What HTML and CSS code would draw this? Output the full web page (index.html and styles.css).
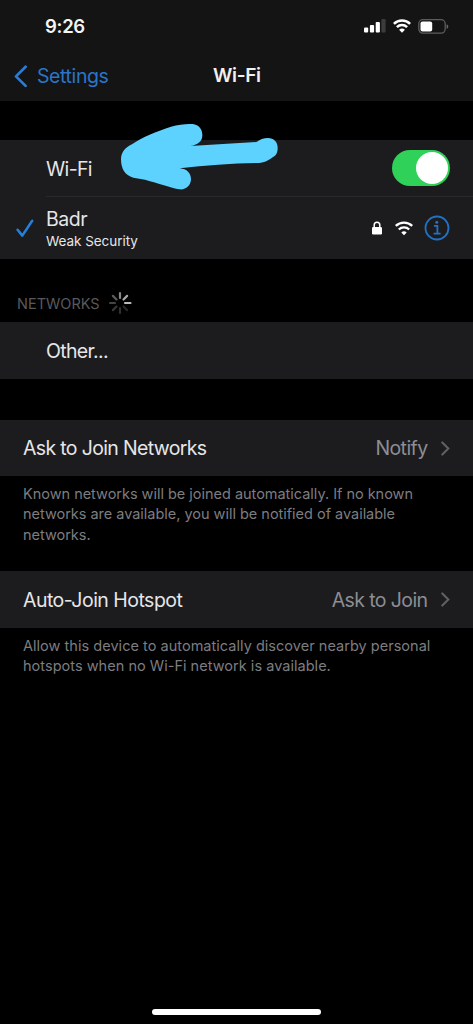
FILE: index.html
```html
<!DOCTYPE html>
<html lang="en">
<head>
<meta charset="utf-8">
<title>Wi-Fi</title>
<link rel="stylesheet" href="styles.css">
</head>
<body>
<div class="screen">
  <header class="header">
    <div class="status">
      <span class="time">9:26</span>
      <div class="status-icons">
        <svg width="22" height="14" viewBox="0 0 22 14"><g fill="#fff"><rect x="0" y="8.5" width="4.2" height="5" rx="1"/><rect x="5.9" y="6" width="4.2" height="7.5" rx="1"/><rect x="11.7" y="3" width="4.2" height="10.5" rx="1"/></g><rect x="17.4" y="0" width="4.2" height="13.5" rx="1" fill="#3c3c3e"/></svg>
        <svg class="status-wifi" width="18" height="14" viewBox="0 0 18 14"><g fill="none" stroke="#fff" stroke-width="2.5"><path d="M.9 4.9a11.6 11.6 0 0 1 16.2 0"/><path d="M3.9 8.2a7.3 7.3 0 0 1 10.2 0"/></g><path d="M9 13.7 6.1 10.8a4.2 4.2 0 0 1 5.8 0z" fill="#fff"/></svg>
        <svg class="battery" width="31" height="15" viewBox="0 0 31 15"><rect x=".8" y=".7" width="26.4" height="13.4" rx="4" fill="none" stroke="#5c5c5e" stroke-width="1.3"/><rect x="2.5" y="2.4" width="11.7" height="10" rx="2" fill="#fff"/><path d="M28.6 5.2c2.2.9 2.2 3.7 0 4.6z" fill="#6a6a6c"/></svg>
      </div>
    </div>
    <nav class="nav">
      <a class="back"><svg width="14" height="23" viewBox="0 0 14 23"><path d="M11.6 1.8 2 11.4l9.6 9.5" fill="none" stroke="#2b7cd6" stroke-width="2.7" stroke-linecap="round" stroke-linejoin="round"/></svg><span class="back-label">Settings</span></a>
      <h1 class="title">Wi-Fi</h1>
    </nav>
  </header>

  <section class="card wifi-card">
    <div class="row wifi-row">
      <span class="label wifi-label">Wi-Fi</span>
      <span class="toggle"><span class="knob"></span></span>
    </div>
    <div class="row network-row">
      <svg class="check" width="18" height="19" viewBox="0 0 18 19"><path d="M1.6 10.8 6.3 16.6 16.2 1.7" fill="none" stroke="#2380dc" stroke-width="2.5" stroke-linecap="round" stroke-linejoin="round"/></svg>
      <div class="network">
        <span class="label">Badr</span>
        <span class="security">Weak Security</span>
      </div>
      <svg class="lock" width="10" height="14" viewBox="0 0 10 14"><rect x="0" y="6" width="10" height="7.5" rx="1.2" fill="#fff"/><path d="M2.2 6.5V4a2.8 2.8 0 0 1 5.6 0v2.5" fill="none" stroke="#fff" stroke-width="1.5"/></svg>
      <svg class="row-wifi" width="18" height="15" viewBox="0 0 18 15"><g fill="none" stroke="#fff" stroke-width="2.3"><path d="M.8 4.9a11.7 11.7 0 0 1 16.4 0"/><path d="M3.8 8.5a7.4 7.4 0 0 1 10.4 0"/></g><path d="M9 14.3 6.3 11.5a3.9 3.9 0 0 1 5.4 0z" fill="#fff"/></svg>
      <svg class="info" width="26" height="26" viewBox="0 0 26 26"><g fill="none" stroke="#2272c4" stroke-width="1.8"><circle cx="13" cy="13" r="11.5"/><path d="M10 10.8h3.4v7.7M9.6 18.6h7"/></g><circle cx="12.8" cy="7.2" r="1.5" fill="#2272c4"/></svg>
    </div>
    <svg class="arrow" width="180" height="80" viewBox="0 0 540 240"><path d="M33 132C34 112 45 98 66 88 92 68 142 48 183 35 206 28 229 26 248 27 268 29 278 45 277 62 276 78 266 88 241 93L439 81C449 74 461 69 474 69 491 69 503 81 503 98 503 113 499 121 486 128 471 138 460 144 439 144 364 145 287 151 209 160 231 162 243 174 243 193 242 213 227 225 209 223 181 218 146 205 105 194L70 188C44 180 33 161 33 132Z" fill="#5dd2ff"/></svg>
  </section>

  <div class="networks-heading">
    <span class="networks-text">NETWORKS</span>
    <svg width="24" height="24" viewBox="-12 -12 24 24"><g stroke-width="2.2" stroke-linecap="round"><path d="M0-5v-5" stroke="#858585"/><path d="m3.5-3.5 3.6-3.6" stroke="#a6a6a6"/><path d="M5 0h5.5" stroke="#bcbcbc"/><path d="m3.5 3.5 3.6 3.6" stroke="#272727"/><path d="M0 5v5" stroke="#303030"/><path d="m-3.5 3.5-3.6 3.6" stroke="#363636"/><path d="M-5 0h-5" stroke="#444"/><path d="m-3.5-3.5-3.6-3.6" stroke="#5b5b5b"/></g></svg>
  </div>
  <section class="card row other-row"><span class="label">Other...</span></section>

  <section class="card row ask-row">
    <span class="label">Ask to Join Networks</span>
    <span class="value">Notify</span>
    <svg class="chevron" width="9" height="15" viewBox="0 0 9 15"><path d="m1.3 1.4 6 6.1-6 6.1" fill="none" stroke="#606064" stroke-width="2.1" stroke-linecap="round"/></svg>
  </section>
  <p class="note note-ask">Known networks will be joined automatically. If no known<br>networks are available, you will be notified of available<br>networks.</p>

  <section class="card row auto-row">
    <span class="label auto">Auto-Join Hotspot</span>
    <span class="value">Ask to Join</span>
    <svg class="chevron" width="9" height="15" viewBox="0 0 9 15"><path d="m1.3 1.4 6 6.1-6 6.1" fill="none" stroke="#606064" stroke-width="2.1" stroke-linecap="round"/></svg>
  </section>
  <p class="note note-auto">Allow this device to automatically discover nearby personal<br>hotspots when no Wi-Fi network is available.</p>

  <div class="home-bar"></div>
</div>
</body>
</html>
```
FILE: styles.css
```css
* { box-sizing: border-box; }
body { margin: 0; background: #000; }
.screen {
  width: 473px;
  height: 1024px;
  display: flex;
  flex-direction: column;
  background: #000;
  font-family: Inter, "Liberation Sans", sans-serif;
  color: #e6e6e8;
  white-space: nowrap;
  overflow: hidden;
}
.header { height: 101px; background: #141414; flex: none; }
.status { height: 52px; padding: 0 24px 0 45px; display: flex; align-items: center; justify-content: space-between; }
.time { font-size: 18.5px; font-weight: 600; line-height: 24px; letter-spacing: -.3px; color: #f4f4f4; }
.status-icons { display: flex; align-items: center; }
.status-wifi { margin-left: 7px; }
.battery { margin-left: 7px; }
.nav { height: 48px; padding-left: 14px; display: grid; grid-template-columns: 199px 1fr; align-items: center; }
.back { display: flex; align-items: center; gap: 9px; }
.back-label { font-size: 19.5px; line-height: 24px; letter-spacing: -.4px; color: #2b74c8; }
.title { margin: 0; font-size: 19px; line-height: 24px; letter-spacing: -.35px; font-weight: 600; color: #f0f0f0; }

.card { background: #1c1c1f; flex: none; }
.row { display: flex; align-items: center; }
.label { font-size: 19.5px; line-height: 24px; letter-spacing: -.65px; }
.wifi-card { margin-top: 39px; height: 119px; position: relative; }
.wifi-row { height: 57px; margin-left: 46px; padding-right: 23px; justify-content: space-between; border-bottom: 1px solid #29292c; }
.wifi-label { padding-top: 2px; }
.toggle { width: 58px; height: 36px; border-radius: 18px; padding: 2px; background: #30d158; display: flex; justify-content: flex-end; }
.knob { width: 32px; height: 32px; border-radius: 50%; background: #fff; }
.network-row { height: 62px; padding-left: 16px; padding-right: 23px; }
.network { display: flex; flex-direction: column; margin-left: 12px; padding-top: 2px; flex: 1; align-items: flex-start; }
.network .label { letter-spacing: -.5px; }
.security { font-size: 13.5px; line-height: 20px; letter-spacing: -.05px; }
.row-wifi { margin-left: 13px; }
.info { margin-left: 11px; }
.arrow { position: absolute; left: 110px; top: -25px; }

.networks-heading { height: 63px; padding: 26px 0 0 17px; display: flex; align-items: flex-start; gap: 8px; flex: none; }
.networks-heading svg { margin-top: 6px; }
.networks-text { font-size: 14.5px; line-height: 37px; color: #59595c; }
.other-row { height: 57px; padding-left: 46px; }
.ask-row { margin-top: 41px; height: 56px; }
.auto-row { height: 57px; }
.ask-row, .auto-row { padding: 0 23px; }
.auto { letter-spacing: -.52px; }
.value { margin-left: auto; font-size: 19.5px; line-height: 24px; letter-spacing: -.6px; color: #8d8d92; }
.chevron { margin-left: 13.5px; }
.note { margin: 0; padding: 8px 23px 0; font-size: 14.5px; line-height: 20.3px; letter-spacing: -.02px; color: #7d7d80; flex: none; }
.note-ask { height: 95px; }
.note-auto { letter-spacing: .03px; }
.home-bar { width: 169px; height: 6px; border-radius: 3px; background: #fff; margin: auto auto 9px 152px; flex: none; }
```
